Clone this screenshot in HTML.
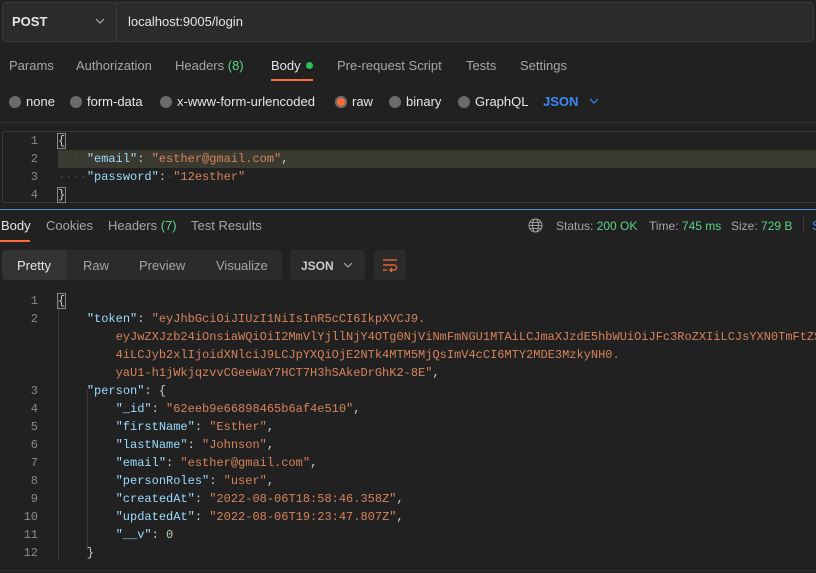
<!DOCTYPE html>
<html><head><meta charset="utf-8"><style>
*{margin:0;padding:0;box-sizing:border-box}
body{width:816px;height:573px;background:#212121;overflow:hidden;position:relative;font-family:"Liberation Sans",sans-serif;font-size:13px;color:#a6a6a6}
.a{position:absolute;white-space:nowrap}
.m{font-family:"Liberation Mono",monospace;font-size:12px;line-height:18px}
.k{color:#9cdcfe}.s{color:#d6845b}.p{color:#cccccc}.n{color:#b5cea8}.ln{color:#8a8a8a;width:38px;text-align:right}
.g{color:#5fd38a}.w{color:#e6e6e6}
.rd{display:inline-block;width:12px;height:12px;border-radius:50%;background:#6b6b6b;vertical-align:-2px;margin-right:5px}
.dot{color:#4a4a4a}
.st{font-size:12px;top:219px}
</style></head><body>
<div class="a" style="left:2px;top:2px;width:812px;height:40px;background:#2b2b2b;border:1px solid #383838;border-radius:4px"></div>
<div class="a" style="left:116px;top:3px;width:1px;height:38px;background:#3a3a3a"></div>
<div class="a w" style="left:12px;top:14px;font-weight:bold;font-size:13px">POST</div>
<svg class="a" style="left:95px;top:18px" width="10" height="7"><path d="M1 1L5 5L9 1" stroke="#aaa" fill="none" stroke-width="1.2"/></svg>
<div class="a w" style="left:128px;top:14px">localhost:9005/login</div>

<div class="a" style="left:9px;top:58px">Params</div>
<div class="a" style="left:76px;top:58px">Authorization</div>
<div class="a" style="left:175px;top:58px">Headers <span class="g">(8)</span></div>
<div class="a w" style="left:271px;top:58px">Body <span style="display:inline-block;width:7px;height:7px;border-radius:50%;background:#2fbf56;vertical-align:1px;margin-left:2px"></span></div>
<div class="a" style="left:271px;top:79px;width:42px;height:2px;background:#ff6c37"></div>
<div class="a" style="left:337px;top:58px">Pre-request Script</div>
<div class="a" style="left:466px;top:58px">Tests</div>
<div class="a" style="left:520px;top:58px">Settings</div>

<div class="a w" style="left:9px;top:94px"><span class="rd"></span>none</div>
<div class="a w" style="left:70px;top:94px"><span class="rd"></span>form-data</div>
<div class="a w" style="left:160px;top:94px"><span class="rd"></span>x-www-form-urlencoded</div>
<div class="a w" style="left:335px;top:94px"><span class="rd" style="background:#ff6c37;box-shadow:inset 0 0 0 2px #6b6b6b"></span>raw</div>
<div class="a w" style="left:389px;top:94px"><span class="rd"></span>binary</div>
<div class="a w" style="left:458px;top:94px"><span class="rd"></span>GraphQL</div>
<div class="a" style="left:543px;top:94px;color:#3d8af7;font-weight:bold">JSON</div>
<svg class="a" style="left:589px;top:98px" width="10" height="7"><path d="M1 1L5 5L9 1" stroke="#3d8af7" fill="none" stroke-width="1.2"/></svg>
<div class="a" style="left:0;top:122px;width:816px;height:1px;background:#333"></div>

<div class="a" style="left:2px;top:131px;width:814px;height:72px;border:1px solid #3a3a3a;border-right:none;border-radius:3px 0 0 3px"></div>
<div class="a" style="left:58px;top:150px;width:758px;height:18px;background:#3a3a30"></div>
<div class="a m ln" style="left:0;top:132px">1<br>2<br>3<br>4</div>
<div class="a m p" style="left:58px;top:132px"><span style="outline:1px solid #888">{</span><br><span class="dot">····</span><span class="k">"email"</span>: <span class="s">"esther@gmail.com"</span>,<br><span class="dot">····</span><span class="k">"password"</span>:<span class="dot">·</span><span class="s">"12esther"</span><br><span style="outline:1px solid #888">}</span></div>

<div class="a" style="left:0;top:209px;width:816px;height:1px;background:#4f8fd8"></div>
<div class="a w" style="left:1px;top:218px">Body</div>
<div class="a" style="left:0;top:240px;width:30px;height:2px;background:#ff6c37"></div>
<div class="a" style="left:46px;top:218px">Cookies</div>
<div class="a" style="left:108px;top:218px">Headers <span class="g">(7)</span></div>
<div class="a" style="left:191px;top:218px">Test Results</div>
<svg class="a" style="left:528px;top:218px" width="15" height="15" fill="none" stroke="#999" stroke-width="1.1"><circle cx="7.5" cy="7.5" r="6.5"/><ellipse cx="7.5" cy="7.5" rx="3" ry="6.5"/><path d="M1 7.5H14M2 4.5H13M2 10.5H13"/></svg>
<div class="a st" style="left:556px">Status: <span class="g">200 OK</span></div>
<div class="a st" style="left:649px">Time: <span class="g">745 ms</span></div>
<div class="a st" style="left:731px">Size: <span class="g">729 B</span></div>
<div class="a" style="left:803px;top:216px;width:1px;height:16px;background:#3a3a3a"></div>
<div class="a" style="left:812px;top:218px;color:#3d8af7">S</div>

<div class="a" style="left:2px;top:250px;width:280px;height:30px;background:#2b2b2b;border-radius:4px"></div>
<div class="a" style="left:2px;top:250px;width:65px;height:30px;background:#333;border-radius:4px 0 0 4px"></div>
<div class="a w" style="left:17px;top:258px">Pretty</div>
<div class="a" style="left:83px;top:258px">Raw</div>
<div class="a" style="left:139px;top:258px">Preview</div>
<div class="a" style="left:216px;top:258px">Visualize</div>
<div class="a" style="left:290px;top:250px;width:75px;height:30px;background:#2b2b2b;border-radius:4px"></div>
<div class="a" style="left:301px;top:259px;color:#ccc;font-weight:bold;font-size:12px">JSON</div>
<svg class="a" style="left:343px;top:262px" width="10" height="7"><path d="M1 1L5 5L9 1" stroke="#aaa" fill="none" stroke-width="1.2"/></svg>
<div class="a" style="left:374px;top:250px;width:32px;height:30px;background:#2b2b2b;border-radius:4px"></div>
<svg class="a" style="left:382px;top:258px" width="16" height="14" fill="none" stroke="#ff6c37" stroke-width="1.2"><path d="M1 2H15M1 7H12a2.5 2.5 0 0 1 0 5H8M10 10L8 12L10 14M1 12H5"/></svg>

<div class="a" style="left:58px;top:300px;width:1px;height:260px;background:#3a3a3a"></div>
<div class="a" style="left:87px;top:390px;width:1px;height:160px;background:#3a3a3a"></div>
<div class="a m ln" style="left:0;top:292px">1<br>2<br><br><br><br>3<br>4<br>5<br>6<br>7<br>8<br>9<br>10<br>11<br>12</div>
<div class="a m p" style="left:58px;top:292px"><span style="outline:1px solid #888">{</span><br>
&nbsp;&nbsp;&nbsp;&nbsp;<span class="k">"token"</span>: <span class="s">"eyJhbGciOiJIUzI1NiIsInR5cCI6IkpXVCJ9.</span><br>
<span class="s">&nbsp;&nbsp;&nbsp;&nbsp;&nbsp;&nbsp;&nbsp;&nbsp;eyJwZXJzb24iOnsiaWQiOiI2MmVlYjllNjY4OTg0NjViNmFmNGU1MTAiLCJmaXJzdE5hbWUiOiJFc3RoZXIiLCJsYXN0TmFtZSI6</span><br>
<span class="s">&nbsp;&nbsp;&nbsp;&nbsp;&nbsp;&nbsp;&nbsp;&nbsp;4iLCJyb2xlIjoidXNlciJ9LCJpYXQiOjE2NTk4MTM5MjQsImV4cCI6MTY2MDE3MzkyNH0.</span><br>
<span class="s">&nbsp;&nbsp;&nbsp;&nbsp;&nbsp;&nbsp;&nbsp;&nbsp;yaU1-h1jWkjqzvvCGeeWaY7HCT7H3hSAkeDrGhK2-8E"</span>,<br>
&nbsp;&nbsp;&nbsp;&nbsp;<span class="k">"person"</span>: {<br>
&nbsp;&nbsp;&nbsp;&nbsp;&nbsp;&nbsp;&nbsp;&nbsp;<span class="k">"_id"</span>: <span class="s">"62eeb9e66898465b6af4e510"</span>,<br>
&nbsp;&nbsp;&nbsp;&nbsp;&nbsp;&nbsp;&nbsp;&nbsp;<span class="k">"firstName"</span>: <span class="s">"Esther"</span>,<br>
&nbsp;&nbsp;&nbsp;&nbsp;&nbsp;&nbsp;&nbsp;&nbsp;<span class="k">"lastName"</span>: <span class="s">"Johnson"</span>,<br>
&nbsp;&nbsp;&nbsp;&nbsp;&nbsp;&nbsp;&nbsp;&nbsp;<span class="k">"email"</span>: <span class="s">"esther@gmail.com"</span>,<br>
&nbsp;&nbsp;&nbsp;&nbsp;&nbsp;&nbsp;&nbsp;&nbsp;<span class="k">"personRoles"</span>: <span class="s">"user"</span>,<br>
&nbsp;&nbsp;&nbsp;&nbsp;&nbsp;&nbsp;&nbsp;&nbsp;<span class="k">"createdAt"</span>: <span class="s">"2022-08-06T18:58:46.358Z"</span>,<br>
&nbsp;&nbsp;&nbsp;&nbsp;&nbsp;&nbsp;&nbsp;&nbsp;<span class="k">"updatedAt"</span>: <span class="s">"2022-08-06T19:23:47.807Z"</span>,<br>
&nbsp;&nbsp;&nbsp;&nbsp;&nbsp;&nbsp;&nbsp;&nbsp;<span class="k">"__v"</span>: <span class="n">0</span><br>
&nbsp;&nbsp;&nbsp;&nbsp;}</div>
<div class="a" style="left:0;top:570px;width:816px;height:1px;background:#333"></div>
</body></html>
